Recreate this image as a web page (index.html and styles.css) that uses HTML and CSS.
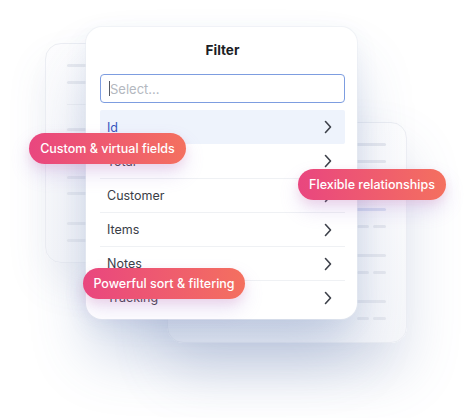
FILE: index.html
```html
<!DOCTYPE html>
<html>
<head>
<meta charset="utf-8">
<link rel="stylesheet" href="styles.css">
</head>
<body>
<div class="stage">
  <div class="bg-card bg-left">
    <div class="ghost-list">
      <span class="gl long"></span><span class="gl long"></span>
      <span class="gl sep"></span>
      <span class="gl long"></span><span class="gl long"></span>
      <span class="gl long"></span><span class="gl long"></span>
      <span class="gl long"></span><span class="gl long"></span>
    </div>
  </div>
  <div class="bg-card bg-right">
    <div class="ghost-rows">
      <div class="gr"><span class="ln full"></span><span class="ln full"></span></div>
      <div class="gr"><span class="ln full blue"></span><span class="ln pair"><i></i><i></i></span></div>
      <div class="gr"><span class="ln full"></span><span class="ln pair"><i></i><i></i></span></div>
      <div class="gr"><span class="ln full"></span><span class="ln pair"><i></i><i></i></span></div>
    </div>
  </div>

  <div class="card">
    <div class="title">Filter</div>
    <div class="input"><span class="caret"></span><span class="ph">Select...</span></div>
    <ul class="list">
      <li class="row active"><span>Id</span><svg class="chev" viewBox="0 0 8 14"><path d="M1.5 1.5 L6.5 7 L1.5 12.5"/></svg></li>
      <li class="row"><span>Total</span><svg class="chev" viewBox="0 0 8 14"><path d="M1.5 1.5 L6.5 7 L1.5 12.5"/></svg></li>
      <li class="row"><span>Customer</span><svg class="chev" viewBox="0 0 8 14"><path d="M1.5 1.5 L6.5 7 L1.5 12.5"/></svg></li>
      <li class="row"><span>Items</span><svg class="chev" viewBox="0 0 8 14"><path d="M1.5 1.5 L6.5 7 L1.5 12.5"/></svg></li>
      <li class="row"><span>Notes</span><svg class="chev" viewBox="0 0 8 14"><path d="M1.5 1.5 L6.5 7 L1.5 12.5"/></svg></li>
      <li class="row"><span>Tracking</span><svg class="chev" viewBox="0 0 8 14"><path d="M1.5 1.5 L6.5 7 L1.5 12.5"/></svg></li>
    </ul>
  </div>

  <div class="pill pill-custom">Custom &amp; virtual fields</div>
  <div class="pill pill-flex">Flexible relationships</div>
  <div class="pill pill-sort">Powerful sort &amp; filtering</div>
</div>
</body>
</html>
```

FILE: styles.css
```css
html, body {
  margin: 0;
  padding: 0;
  background: #ffffff;
}

.stage {
  position: relative;
  width: 474px;
  height: 418px;
  overflow: hidden;
  font-family: Inter, "Noto Sans", "Liberation Sans", sans-serif;
}

.bg-card {
  position: absolute;
  box-sizing: border-box;
  border-radius: 16px;
  border: 1px solid #eceef3;
  background: linear-gradient(180deg, #fdfdfe 0%, #f6f7fa 100%);
  box-shadow: 0 20px 40px rgba(90, 110, 160, 0.10);
}

.bg-left {
  left: 45px;
  top: 43px;
  width: 160px;
  height: 220px;
}

.bg-right {
  left: 167px;
  top: 122px;
  width: 240px;
  height: 221px;
  box-shadow: 0 30px 55px rgba(80, 105, 160, 0.20);
}

.ghost-list {
  display: flex;
  flex-direction: column;
  padding: 20px 0 0 21px;
}

.gl {
  display: block;
  width: 60px;
  height: 3px;
  border-radius: 2px;
  background: #e9ebf0;
}

.gl:nth-child(1) { margin-bottom: 14px; }
.gl:nth-child(2) { margin-bottom: 20px; }
.gl.sep { height: 1px; background: #f0f1f4; margin-bottom: 23px; }
.gl:nth-child(4) { margin-bottom: 14px; }
.gl:nth-child(5) { margin-bottom: 28px; }
.gl:nth-child(6) { margin-bottom: 13px; }
.gl:nth-child(7) { margin-bottom: 27px; }
.gl:nth-child(8) { margin-bottom: 14px; }

.ghost-rows {
  display: flex;
  flex-direction: column;
  align-items: flex-end;
  padding: 20px 20px 0 0;
  gap: 26px;
}

.gr {
  display: flex;
  flex-direction: column;
  gap: 14px;
  width: 60px;
}

.gr:nth-child(2) { margin-top: 19px; }

.ln {
  display: block;
  height: 3px;
  border-radius: 2px;
  background: #e7e9ef;
}

.ln.blue { background: #dde3f3; }

.ln.pair {
  display: flex;
  justify-content: flex-end;
  gap: 4px;
  background: none;
}

.ln.pair i {
  display: block;
  height: 3px;
  border-radius: 2px;
  background: #e7e9ef;
}

.ln.pair i:nth-child(1) { width: 12px; }
.ln.pair i:nth-child(2) { width: 13px; }

.card {
  position: absolute;
  left: 86px;
  top: 27px;
  width: 271px;
  height: 292px;
  box-sizing: border-box;
  background: #ffffff;
  border-radius: 16px;
  padding: 13px 12px 4px 14px;
  display: flex;
  flex-direction: column;
  box-shadow: 0 0 0 1px rgba(232, 235, 241, 0.5), 0 40px 60px -5px rgba(70, 100, 165, 0.28), 0 8px 24px rgba(70, 100, 165, 0.08);
}

.title {
  text-align: center;
  font-size: 13.5px;
  font-weight: 700;
  color: #1b1e25;
  line-height: 20px;
  margin-bottom: 14px;
}

.input {
  box-sizing: border-box;
  height: 29px;
  border: 1.5px solid #7d9de0;
  border-radius: 4px;
  display: flex;
  align-items: center;
  padding-left: 8px;
  margin-bottom: 7px;
}

.caret {
  display: block;
  width: 1px;
  height: 15px;
  background: #555a64;
}

.ph {
  font-size: 13px;
  color: #b4b8c0;
}

.list {
  list-style: none;
  margin: 0;
  padding: 0;
  display: flex;
  flex-direction: column;
}

.row {
  height: 34px;
  box-sizing: border-box;
  display: flex;
  align-items: center;
  justify-content: space-between;
  padding: 0 13px 0 7px;
  font-size: 12.5px;
  color: #3a3e47;
  border-top: 1px solid #eff1f4;
}

.row:first-child { border-top: none; }
.row:nth-child(2) { border-top: none; }

.row.active {
  background: #eef3fc;
  color: #3856c0;
  border-radius: 2px;
}

.chev {
  width: 8px;
  height: 14px;
  fill: none;
  stroke: #3d414a;
  stroke-width: 1.6;
  stroke-linecap: round;
  stroke-linejoin: round;
}

.pill {
  position: absolute;
  height: 31px;
  box-sizing: border-box;
  border-radius: 16px;
  display: flex;
  align-items: center;
  justify-content: center;
  color: #ffffff;
  font-size: 12.5px;
  font-weight: 500;
  background: linear-gradient(90deg, #e9467f 0%, #f4705f 100%);
  box-shadow: 0 10px 20px rgba(150, 110, 210, 0.20), 0 4px 8px rgba(233, 70, 127, 0.12);
  white-space: nowrap;
}

.pill-custom { left: 29px; top: 133px; width: 157px; }
.pill-flex { left: 298px; top: 169px; width: 148px; }
.pill-sort { left: 83px; top: 268px; width: 162px; }
```
